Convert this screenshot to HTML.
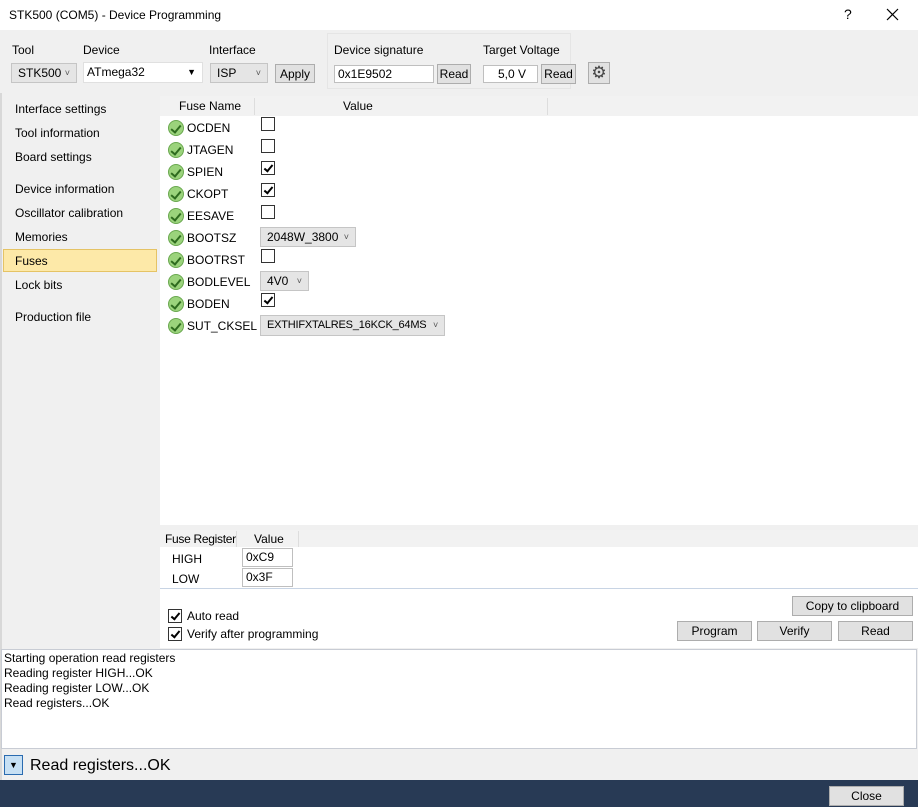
<!DOCTYPE html>
<html><head><style>
*{margin:0;padding:0;box-sizing:border-box}
body{width:918px;height:807px;position:relative;background:#f0f0f0;font-family:"Liberation Sans",sans-serif;font-size:12px;color:#000;overflow:hidden}
.a{position:absolute}
.btn{position:absolute;background:#e1e1e1;border:1px solid #adadad;text-align:center;font-size:12px;line-height:18px}
.inp{position:absolute;background:#fff;border:1px solid #bfbfbf;font-size:12px;line-height:17px;padding-left:3px}
.sel{position:absolute;background:#e5e5e5;border:1px solid #c5c5c5;font-size:12px;line-height:19px;padding-left:6px;white-space:nowrap;overflow:hidden}
.sel:after{content:"\02C5";position:absolute;right:6px;top:0;font-size:9px;color:#555}
.nav{position:absolute;left:15px;font-size:12px}
.row{position:absolute;left:168px;height:20px;font-size:12px}
.ok{position:absolute;left:0;top:2px;width:16px;height:16px;border-radius:50%;background:#9bd37c;border:1px solid #6aa84f}
.ok:after{content:"";position:absolute;left:4px;top:2px;width:4px;height:8px;border:solid #2e6b1e;border-width:0 2px 2px 0;transform:rotate(40deg)}
.cb{position:absolute;left:261px;width:14px;height:14px;border:1px solid #333;background:#fff}
.cb.c:after{content:"";position:absolute;left:4px;top:1px;width:3px;height:7px;border:solid #000;border-width:0 2px 2px 0;transform:rotate(40deg)}
</style></head><body>
<div class="a" style="left:0;top:0;width:918px;height:30px;background:#fff"></div>
<div class="a" style="left:9px;top:8px;font-size:12px">STK500 (COM5) - Device Programming</div>
<div class="a" style="left:844px;top:6px;font-size:14px">?</div>
<svg class="a" style="left:886px;top:8px" width="13" height="13"><path d="M1 1L12 12M12 1L1 12" stroke="#000" stroke-width="1.2"/></svg>

<div class="a" style="left:12px;top:43px">Tool</div>
<div class="a" style="left:83px;top:43px">Device</div>
<div class="a" style="left:209px;top:43px">Interface</div>
<div class="sel" style="left:11px;top:63px;width:66px;height:20px">STK500</div>
<div class="inp" style="left:83px;top:62px;width:120px;height:21px;line-height:19px;border-color:#e0e0e0">ATmega32<span style="position:absolute;right:6px;font-size:9px">▼</span></div>
<div class="sel" style="left:210px;top:63px;width:58px;height:20px">ISP</div>
<div class="btn" style="left:275px;top:64px;width:40px;height:19px">Apply</div>
<div class="a" style="left:327px;top:33px;width:244px;height:56px;border:1px solid #e5e5e5"></div>
<div class="a" style="left:334px;top:43px">Device signature</div>
<div class="a" style="left:483px;top:43px">Target Voltage</div>
<div class="inp" style="left:334px;top:65px;width:100px;height:18px">0x1E9502</div>
<div class="btn" style="left:437px;top:64px;width:34px;height:20px">Read</div>
<div class="inp" style="left:483px;top:65px;width:55px;height:18px;text-align:center">5,0 V</div>
<div class="btn" style="left:541px;top:64px;width:35px;height:20px">Read</div>
<div class="btn" style="left:588px;top:62px;width:22px;height:22px;font-size:17px;line-height:20px;color:#444">⚙</div>

<div class="a" style="left:0;top:93px;width:2px;height:690px;background:#d8d8d8"></div>
<div class="nav" style="top:102px">Interface settings</div>
<div class="nav" style="top:126px">Tool information</div>
<div class="nav" style="top:150px">Board settings</div>
<div class="nav" style="top:182px">Device information</div>
<div class="nav" style="top:206px">Oscillator calibration</div>
<div class="nav" style="top:230px">Memories</div>
<div class="a" style="left:3px;top:249px;width:154px;height:23px;background:#fde9a8;border:1px solid #e5c365"></div>
<div class="nav" style="top:254px">Fuses</div>
<div class="nav" style="top:278px">Lock bits</div>
<div class="nav" style="top:310px">Production file</div>

<div class="a" style="left:160px;top:96px;width:758px;height:430px;background:#fff"></div>
<div class="a" style="left:160px;top:96px;width:758px;height:20px;background:#f2f2f2"></div>
<div class="a" style="left:179px;top:99px">Fuse Name</div>
<div class="a" style="left:254px;top:98px;width:1px;height:17px;background:#ddd"></div>
<div class="a" style="left:343px;top:99px">Value</div>
<div class="a" style="left:547px;top:98px;width:1px;height:17px;background:#ddd"></div>

<div class="row" style="top:118px"><div class="ok"></div><span class="a" style="left:19px;top:3px">OCDEN</span></div>
<div class="cb" style="top:117px"></div>
<div class="row" style="top:140px"><div class="ok"></div><span class="a" style="left:19px;top:3px">JTAGEN</span></div>
<div class="cb" style="top:139px"></div>
<div class="row" style="top:162px"><div class="ok"></div><span class="a" style="left:19px;top:3px">SPIEN</span></div>
<div class="cb c" style="top:161px"></div>
<div class="row" style="top:184px"><div class="ok"></div><span class="a" style="left:19px;top:3px">CKOPT</span></div>
<div class="cb c" style="top:183px"></div>
<div class="row" style="top:206px"><div class="ok"></div><span class="a" style="left:19px;top:3px">EESAVE</span></div>
<div class="cb" style="top:205px"></div>
<div class="row" style="top:228px"><div class="ok"></div><span class="a" style="left:19px;top:3px">BOOTSZ</span></div>
<div class="sel" style="left:260px;top:227px;width:96px;height:20px">2048W_3800</div>
<div class="row" style="top:250px"><div class="ok"></div><span class="a" style="left:19px;top:3px">BOOTRST</span></div>
<div class="cb" style="top:249px"></div>
<div class="row" style="top:272px"><div class="ok"></div><span class="a" style="left:19px;top:3px">BODLEVEL</span></div>
<div class="sel" style="left:260px;top:271px;width:49px;height:20px">4V0</div>
<div class="row" style="top:294px"><div class="ok"></div><span class="a" style="left:19px;top:3px">BODEN</span></div>
<div class="cb c" style="top:293px"></div>
<div class="row" style="top:316px"><div class="ok"></div><span class="a" style="left:19px;top:3px">SUT_CKSEL</span></div>
<div class="sel" style="left:260px;top:315px;width:185px;height:21px;font-size:11px;letter-spacing:-0.2px">EXTHIFXTALRES_16KCK_64MS</div>

<div class="a" style="left:160px;top:525px;width:758px;height:5px;background:#f0f0f0"></div>
<div class="a" style="left:160px;top:530px;width:758px;height:118px;background:#fff"></div>
<div class="a" style="left:160px;top:530px;width:758px;height:17px;background:#f2f2f2"></div>
<div class="a" style="left:165px;top:532px;letter-spacing:-0.3px">Fuse Register</div>
<div class="a" style="left:236px;top:531px;width:1px;height:16px;background:#ddd"></div>
<div class="a" style="left:254px;top:532px">Value</div>
<div class="a" style="left:298px;top:531px;width:1px;height:16px;background:#ddd"></div>
<div class="a" style="left:172px;top:552px">HIGH</div>
<div class="inp" style="left:242px;top:548px;width:51px;height:19px">0xC9</div>
<div class="a" style="left:172px;top:572px">LOW</div>
<div class="inp" style="left:242px;top:568px;width:51px;height:19px">0x3F</div>
<div class="a" style="left:160px;top:588px;width:758px;height:1px;background:#c8d4e4"></div>
<div class="cb c" style="left:168px;top:609px"></div>
<div class="a" style="left:187px;top:609px">Auto read</div>
<div class="cb c" style="left:168px;top:627px"></div>
<div class="a" style="left:187px;top:627px">Verify after programming</div>
<div class="btn" style="left:792px;top:596px;width:121px;height:20px">Copy to clipboard</div>
<div class="btn" style="left:677px;top:621px;width:75px;height:20px">Program</div>
<div class="btn" style="left:757px;top:621px;width:75px;height:20px">Verify</div>
<div class="btn" style="left:838px;top:621px;width:75px;height:20px">Read</div>

<div class="a" style="left:1px;top:649px;width:916px;height:100px;background:#fff;border:1px solid #c8ccd4"></div>
<div class="a" style="left:4px;top:651px;line-height:15px">Starting operation read registers<br>Reading register HIGH...OK<br>Reading register LOW...OK<br>Read registers...OK</div>
<div class="a" style="left:4px;top:755px;width:19px;height:20px;background:#c7e0f4;border:1px solid #2a6bb0;text-align:center;font-size:9px;line-height:18px">▼</div>
<div class="a" style="left:30px;top:757px;font-size:16px">Read registers...OK</div>
<div class="a" style="left:0;top:780px;width:918px;height:27px;background:#283a55"></div>
<div class="btn" style="left:829px;top:786px;width:75px;height:20px">Close</div>
</body></html>
